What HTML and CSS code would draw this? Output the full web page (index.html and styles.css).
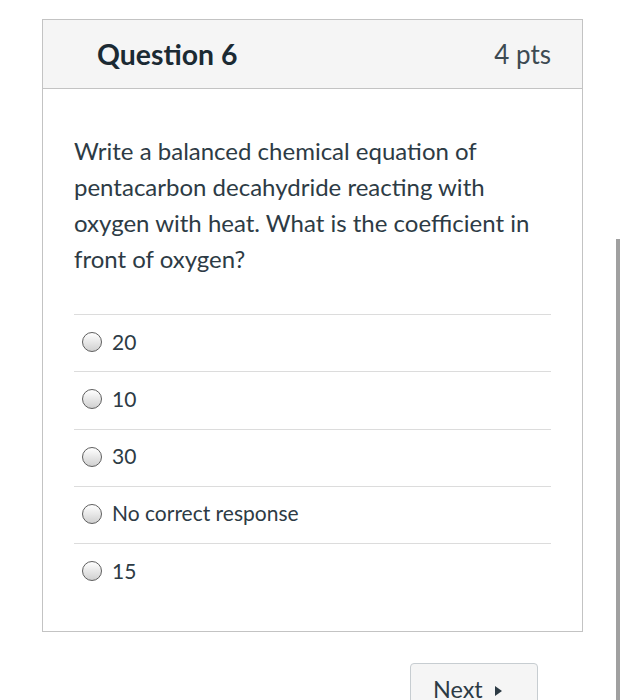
FILE: index.html
```html
<!DOCTYPE html>
<html>
<head>
<meta charset="utf-8">
<link rel="stylesheet" href="styles.css">
</head>
<body>
<div class="page">
  <div class="card">
    <div class="card-header">
      <span class="title">Question 6</span>
      <span class="pts">4 pts</span>
    </div>
    <div class="card-body">
      <p class="question">Write a balanced chemical equation of pentacarbon decahydride reacting with oxygen with heat. What is the coefficient in front of oxygen?</p>
      <div class="answers">
        <div class="answer"><span class="radio"></span><span class="label">20</span></div>
        <div class="answer"><span class="radio"></span><span class="label">10</span></div>
        <div class="answer"><span class="radio"></span><span class="label">30</span></div>
        <div class="answer"><span class="radio"></span><span class="label">No correct response</span></div>
        <div class="answer last"><span class="radio"></span><span class="label">15</span></div>
      </div>
    </div>
  </div>
  <div class="nav">
    <button class="next">Next <span class="tri"></span></button>
  </div>
</div>
<div class="scrollbar"></div>
</body>
</html>
```
FILE: styles.css
```css
html, body {
  margin: 0;
  padding: 0;
  background: #ffffff;
  font-family: Lato, "Open Sans", sans-serif;
  color: #2d3b45;
}
.page {
  padding-top: 19px;
  padding-left: 42px;
  width: 541px;
  height: 681px;
  overflow: hidden;
}
.card {
  width: 541px;
  box-sizing: border-box;
  border: 1px solid #c3c3c3;
  background: #fff;
}
.card-header {
  background: #f5f5f5;
  border-bottom: 1px solid #c3c3c3;
  height: 68px;
  display: flex;
  align-items: center;
  justify-content: space-between;
  padding: 0 31px 0 54px;
}
.title {
  font-size: 28.4px;
  font-weight: 700;
  color: #1b2a33;
}
.pts {
  font-size: 26px;
  color: #3d4a52;
}
.card-body {
  padding: 44px 31px 31px 31px;
}
.question {
  margin: 0;
  font-size: 24px;
  line-height: 36px;
  color: #2d3b45;
}
.answers {
  margin-top: 37px;
}
.answer {
  display: flex;
  align-items: center;
  height: 56.25px;
  box-sizing: content-box;
  border-top: 1px solid #dcdcdc;
  padding-left: 8px;
}
.answer .radio {
  margin-bottom: 2px;
}
.radio {
  width: 18px;
  height: 18px;
  border-radius: 50%;
  border: 1px solid #5e5e5e;
  background: linear-gradient(#ffffff, #d0d0d0);
  flex: none;
}
.label {
  margin-left: 10px;
  font-size: 21px;
  color: #2d3b45;
  padding-bottom: 4px;
}
.nav {
  display: flex;
  justify-content: flex-end;
  padding-right: 45px;
  margin-top: 31px;
}
.next {
  width: 128px;
  height: 50px;
  box-sizing: border-box;
  background: #f5f5f5;
  border: 1px solid #c7cdd1;
  border-radius: 4px;
  font-family: Lato, sans-serif;
  font-size: 23.4px;
  color: #2d3b45;
  text-align: left;
  padding: 11px 0 0 22px;
  display: flex;
  align-items: flex-start;
}
.tri {
  display: inline-block;
  width: 0;
  height: 0;
  border-top: 5px solid transparent;
  border-bottom: 5px solid transparent;
  border-left: 7px solid #2d3b45;
  margin-left: 12px;
  margin-top: 11px;
}
.scrollbar {
  position: absolute;
  left: 616px;
  top: 239px;
  width: 4px;
  height: 461px;
  background: #a0a0a0;
}
```
